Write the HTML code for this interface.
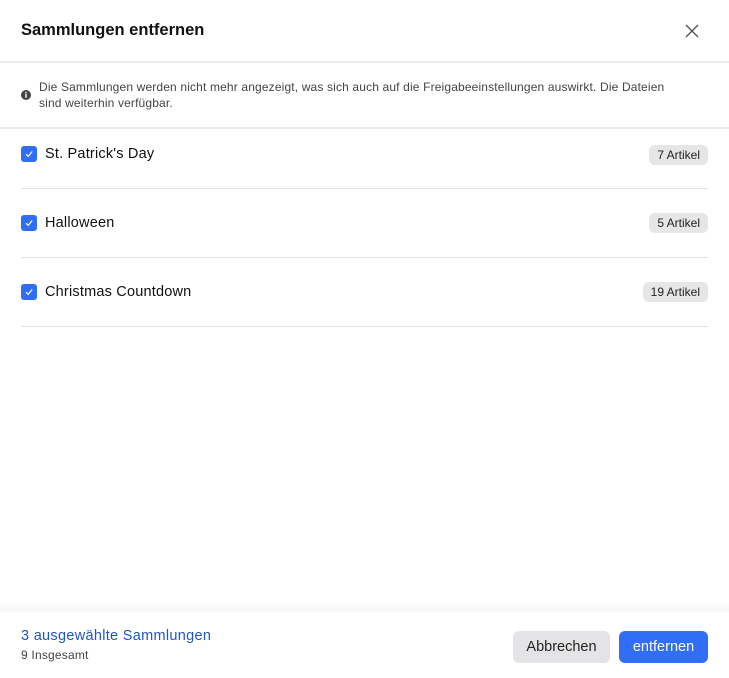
<!DOCTYPE html>
<html><head><meta charset="utf-8"><style>
*{margin:0;padding:0;box-sizing:border-box}
body{width:729px;height:678px;background:#fff;font-family:"Liberation Sans",sans-serif;color:#111;position:relative;overflow:hidden}
.abs{position:absolute}
.sep{position:absolute;left:0;width:729px;height:2px;background:#ebebeb}
.rsep{position:absolute;left:21px;width:687px;height:1px;background:#e3e3e3}
.cb{position:absolute;left:21px;width:16px;height:16px;border-radius:3px;background:#2f6ef5}
.cb svg{position:absolute;left:3px;top:3px}
.lbl{position:absolute;left:45px;font-size:14.5px;font-weight:500;color:#111;letter-spacing:.2px}
.badge{position:absolute;right:21px;height:20px;line-height:20px;padding:0 8px;border-radius:6px;background:#e6e6e6;font-size:12px;color:#222}
.btn{position:absolute;top:631px;height:32px;line-height:32px;border-radius:6px;font-size:14.5px;text-align:center}
</style></head><body>
<div class="abs" style="left:21px;top:21px;font-size:16.5px;font-weight:bold">Sammlungen entfernen</div>
<svg class="abs" style="left:685px;top:24px" width="14" height="14" viewBox="0 0 14 14"><path d="M1 1L13 13M13 1L1 13" stroke="#555" stroke-width="1.4"/></svg>
<div class="sep" style="top:61px"></div>
<svg class="abs" style="left:21px;top:90px" width="10" height="10" viewBox="0 0 10 10"><circle cx="5" cy="5" r="5" fill="#444"/><rect x="4.3" y="4" width="1.4" height="3.8" fill="#fff"/><circle cx="5" cy="2.7" r=".8" fill="#fff"/></svg>
<div class="abs" style="left:39px;top:79px;font-size:12px;line-height:16px;color:#444;width:648px;letter-spacing:.15px">Die Sammlungen werden nicht mehr angezeigt, was sich auch auf die Freigabeeinstellungen auswirkt. Die Dateien sind weiterhin verfügbar.</div>
<div class="sep" style="top:127px"></div>

<div class="cb" style="top:146px"><svg width="10" height="10" viewBox="0 0 10 10"><path d="M2 5.2L4.2 7.4L8.2 2.5" stroke="#fff" stroke-width="1.2" fill="none"/></svg></div>
<div class="lbl" style="top:146px">St. Patrick's Day</div>
<div class="badge" style="top:145px">7 Artikel</div>
<div class="rsep" style="top:188px"></div>

<div class="cb" style="top:215px"><svg width="10" height="10" viewBox="0 0 10 10"><path d="M2 5.2L4.2 7.4L8.2 2.5" stroke="#fff" stroke-width="1.2" fill="none"/></svg></div>
<div class="lbl" style="top:215px">Halloween</div>
<div class="badge" style="top:213px">5 Artikel</div>
<div class="rsep" style="top:257px"></div>

<div class="cb" style="top:284px"><svg width="10" height="10" viewBox="0 0 10 10"><path d="M2 5.2L4.2 7.4L8.2 2.5" stroke="#fff" stroke-width="1.2" fill="none"/></svg></div>
<div class="lbl" style="top:284px">Christmas Countdown</div>
<div class="badge" style="top:282px">19 Artikel</div>
<div class="rsep" style="top:326px"></div>

<div class="abs" style="left:0;top:602px;width:729px;height:10px;background:linear-gradient(#fff,#f6f6f6)"></div>
<div class="abs" style="left:21px;top:628px;font-size:14.5px;color:#1f55c4;letter-spacing:.3px">3 ausgewählte Sammlungen</div>
<div class="abs" style="left:21px;top:648px;font-size:12px;color:#444;letter-spacing:.2px">9 Insgesamt</div>
<div class="btn" style="left:513px;width:97px;background:#e4e4e6;color:#222">Abbrechen</div>
<div class="btn" style="left:619px;width:89px;background:#2f6ef5;color:#fff">entfernen</div>
</body></html>
